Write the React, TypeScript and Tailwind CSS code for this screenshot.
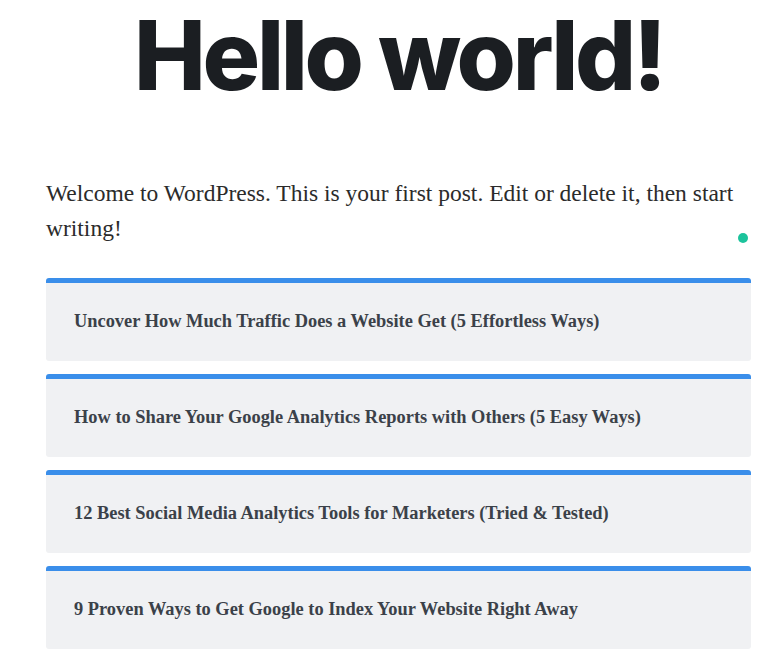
const posts = [
  "Uncover How Much Traffic Does a Website Get (5 Effortless Ways)",
  "How to Share Your Google Analytics Reports with Others (5 Easy Ways)",
  "12 Best Social Media Analytics Tools for Marketers (Tried & Tested)",
  "9 Proven Ways to Get Google to Index Your Website Right Away",
];

function PostCard({ title }: { title: string }) {
  return (
    <a
      href="#"
      className="flex h-[83px] items-center rounded-[3px] border-t-[5px] border-[#3a8eea] bg-[#f0f1f3] px-7 pb-[1px]"
    >
      <span className="font-['Liberation_Serif',serif] text-[18.4px] font-bold text-[#3b4149]">
        {title}
      </span>
    </a>
  );
}

export default function App() {
  return (
    <div className="relative min-h-[655px] bg-white">
      <h1 className="pl-[30px] text-center font-['Inter',sans-serif] text-[96px] font-extrabold leading-[110px] tracking-[-0.035em] text-[#1b1e22]">
        Hello world!
      </h1>

      <div className="ml-[46px] mt-[66px] w-[705px]">
        <p className="font-['Liberation_Serif',serif] text-[23.5px] leading-[35px] text-[#2b2b2b]">
          Welcome to WordPress. This is your first post. Edit or delete it, then start writing!
        </p>

        <div className="mt-[32px] flex flex-col gap-[13px]">
          {posts.map((title) => (
            <PostCard key={title} title={title} />
          ))}
        </div>
      </div>

      <span className="absolute left-[738px] top-[233px] h-[10px] w-[10px] rounded-full bg-[#1cc39c]" />
    </div>
  );
}
